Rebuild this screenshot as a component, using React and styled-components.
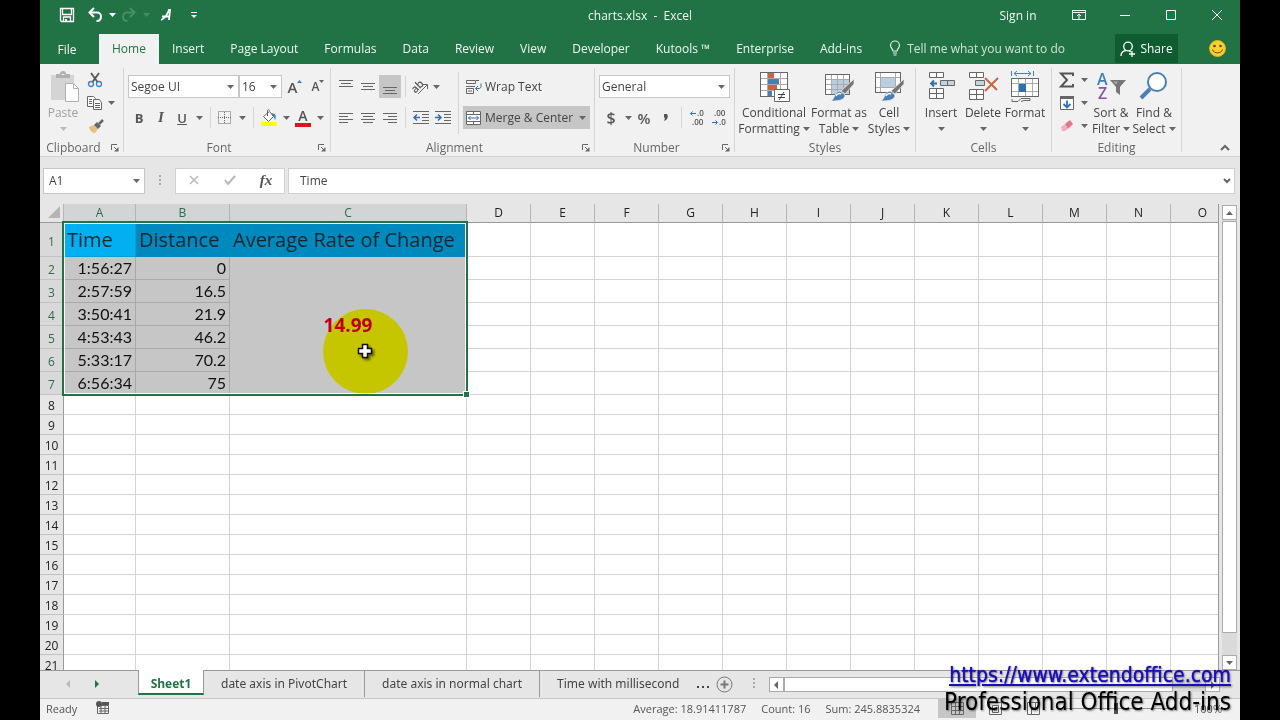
import React from "react";
import styled, { createGlobalStyle } from "styled-components";

const GlobalStyle = createGlobalStyle`
    * {
        box-sizing: border-box;
    }

    body {
        margin: 0;
        background: #000;
        font-family: "Open Sans", "Noto Sans", sans-serif;
        font-size: 12px;
        color: #444;
    }

    button, input, select {
        font: inherit;
        color: inherit;
        margin: 0;
    }

    button {
        display: flex;
        align-items: center;
        justify-content: center;
        padding: 0;
        border: 0;
        background: none;
        white-space: nowrap;
    }

    svg {
        display: block;
        flex: none;
        overflow: visible;
    }
`;

const Window = styled.div`
    position: relative;
    display: flex;
    flex-direction: column;
    height: 100vh;
    margin: 0 40px;
    background: #e6e6e6;
    overflow: hidden;
`;

/* title bar */

const TitleBar = styled.header`
    display: grid;
    grid-template-columns: 1fr auto 1fr;
    align-items: center;
    flex: none;
    height: 34px;
    padding-bottom: 4px;
    background: #217346;
    color: #f0f7f2;
`;

const QuickAccess = styled.div`
    display: flex;
    align-items: center;
    padding-left: 12px;
`;

const Title = styled.span`
    white-space: pre;
`;

const WindowControls = styled.div`
    display: flex;
    justify-content: flex-end;
`;

const PlainButton = styled.button`
    width: ${(props) => props.$w}px;
    height: ${(props) => props.$h || 23}px;
    background: ${(props) => (props.$active ? "#c6c6c6" : "none")};
    opacity: ${(props) => (props.$faded ? 0.3 : 1)};
`;

/* ribbon tabs */

const Tabs = styled.nav`
    display: flex;
    align-items: stretch;
    flex: none;
    height: 30px;
    background: #217346;
    color: #f0f7f2;
`;

const Tab = styled.button`
    padding: 0 13px 2px;
    background: ${(props) => (props.$active ? "#f1f1f1" : "none")};
    color: ${(props) => (props.$active ? "#217346" : "inherit")};
`;

const FileTab = styled(Tab)`
    width: 54px;
    margin-right: 5px;
    padding-bottom: 0;
`;

const TellMe = styled.button`
    gap: 6px;
    margin-left: 14px;
    padding-bottom: 2px;
    color: #cfe3d6;
`;

const Share = styled.button`
    gap: 4px;
    width: 63px;
    margin: 0 27px 1px auto;
    background: #0e5c2f;
    color: #fff;
`;

const Feedback = styled.button`
    width: 24px;
    margin-right: 11px;
    padding-bottom: 2px;
`;

/* ribbon */

const Ribbon = styled.section`
    display: flex;
    flex: none;
    height: 93px;
    background: #f1f1f1;
    border-bottom: 1px solid #d2d2d2;
`;

const GroupBox = styled.div`
    display: flex;
    flex-direction: column;
    flex: none;
    width: ${(props) => props.$w}px;
    margin-top: 4px;
    padding-right: 1px;
    background: linear-gradient(#d4d4d4, #d4d4d4) right top / 1px 84px no-repeat;
`;

const GroupBody = styled.div`
    display: flex;
    flex: none;
    height: 71px;
    padding: 0 ${(props) => (props.$flush ? 0 : 4)}px;
`;

const GroupFooter = styled.div`
    display: flex;
    align-items: center;
    height: 17px;
    color: #666;
`;

const GroupName = styled.span`
    flex: 1;
    text-align: center;
`;

const Rows = styled.div`
    display: flex;
    flex-direction: column;
    gap: 8px;
    padding-top: 7px;
`;

const Row = styled.div`
    display: flex;
    align-items: center;
    height: 23px;
`;

const SmallStack = styled.div`
    display: flex;
    flex-direction: column;
`;

const Divider = styled.span`
    flex: none;
    width: 1px;
    height: 21px;
    margin: 0 4px;
    background: #d4d4d4;
`;

const TallDivider = styled(Divider)`
    height: 62px;
    margin-top: 4px;
`;

const BigButton = styled.button`
    flex-direction: column;
    justify-content: flex-start;
    width: ${(props) => props.$w}px;
    padding-top: 3px;
    line-height: 16px;
    color: ${(props) => (props.$disabled ? "#a0a0a0" : "#444")};
`;

const BigIcon = styled.span`
    margin-bottom: 2px;
`;

const BigLine = styled.span`
    display: flex;
    align-items: center;
    gap: 3px;
    height: 16px;
`;

const WideButton = styled.button`
    justify-content: flex-start;
    gap: 3px;
    width: 127px;
    height: 23px;
    padding-left: 3px;
    background: ${(props) => (props.$active ? "#c6c6c6" : "none")};
`;

const ButtonText = styled.span`
    flex: 1;
    text-align: left;
`;

const WideArrow = styled.span`
    padding-right: 4px;
`;

const SelectBox = styled.label`
    position: relative;
    display: flex;
    align-items: center;
    width: ${(props) => props.$w}px;
    height: ${(props) => props.$h || 23}px;
    background: #fff;
    border: 1px solid #c6c6c6;
`;

const Select = styled.select`
    appearance: none;
    width: 100%;
    height: 100%;
    padding: 0 0 0 ${(props) => props.$pad || 2}px;
    border: 0;
    background: none;
`;

const SelectArrow = styled.span`
    position: absolute;
    right: 4px;
    pointer-events: none;
`;

const Letter = styled.span`
    font-size: ${(props) => props.$size || 13}px;
    font-weight: ${(props) => (props.$bold ? 700 : 600)};
    font-style: ${(props) => (props.$italic ? "italic" : "normal")};
    font-family: ${(props) => (props.$italic ? '"Liberation Serif", serif' : "inherit")};
    text-decoration: ${(props) => (props.$underline ? "underline" : "none")};
    color: #555;
`;

const FontColor = styled.span`
    width: 16px;
    height: 18px;
    border-bottom: 4px solid #d11a1a;
    font-size: 14px;
    font-weight: 600;
    line-height: 13px;
    text-align: center;
    color: #555;
`;

const Collapse = styled.button`
    align-self: flex-end;
    width: 20px;
    height: 17px;
    margin: 0 5px 0 auto;
`;

/* formula bar */

const FormulaBar = styled.div`
    display: flex;
    align-items: center;
    flex: none;
    height: 47px;
    padding: 0 5px 0 3px;
`;

const FormulaActions = styled.div`
    display: flex;
    justify-content: space-around;
    width: 110px;
    height: 26px;
    margin-right: 3px;
    background: #fff;
    border: 1px solid #d0d0d0;
`;

const FormulaField = styled.div`
    display: flex;
    align-items: center;
    flex: 1;
    height: 26px;
    padding-right: 3px;
    background: #fff;
    border: 1px solid #d0d0d0;
`;

const FormulaInput = styled.input`
    flex: 1;
    min-width: 0;
    padding: 0 0 0 11px;
    border: 0;
    outline: 0;
    background: none;
`;

const Grip = styled.span`
    display: flex;
    justify-content: center;
    width: ${(props) => props.$w}px;
`;

/* sheet */

const Workspace = styled.main`
    display: flex;
    flex: 1;
    min-height: 0;
`;

const Viewport = styled.div`
    position: relative;
    flex: 1;
    min-width: 0;
    overflow: hidden;
    border-right: 1px solid #999;
`;

const Sheet = styled.table`
    table-layout: fixed;
    width: 1195px;
    border-collapse: separate;
    border-spacing: 0;
    background: #fff;
`;

const Corner = styled.th`
    height: 19px;
    padding: 0 3px 2px 0;
    background: #e6e6e6;
    border-right: 1px solid #b5b5b5;
    border-bottom: 1px solid #999;

    svg {
        margin-left: auto;
    }
`;

const ColumnHead = styled.th`
    height: 19px;
    padding: 0;
    background: ${(props) => (props.$on ? "#d3d4d5" : "#e6e6e6")};
    border-right: 1px solid #b5b5b5;
    border-bottom: 1px solid #999;
    font-weight: 400;
    line-height: 16px;
    color: ${(props) => (props.$on ? "#2f6b4a" : "#222")};
`;

const RowHead = styled.th`
    height: ${(props) => props.$h}px;
    padding: ${(props) => (props.$h > 30 ? 5 : 3)}px 0 0 0;
    background: ${(props) => (props.$on ? "#d9d9d9" : "#e6e6e6")};
    border-right: 1px solid #999;
    border-bottom: 1px solid #c2c2c2;
    font-weight: 400;
    line-height: 16px;
    text-align: center;
    color: ${(props) => (props.$on ? "#2f6b4a" : "#222")};
`;

const Cell = styled.td`
    padding: 0;
    border-right: 1px solid #d4d4d4;
    border-bottom: 1px solid #d4d4d4;
`;

const TitleCell = styled(Cell)`
    padding: 0 0 0 3px;
    background: ${(props) => (props.$first ? "#00b0f0" : "#0089bc")};
    border-color: ${(props) => (props.$first ? "#00a0da" : "#0089bc")};
    font-size: 20px;
    line-height: 24px;
    white-space: nowrap;
    color: #0f2530;
`;

const NumberCell = styled(Cell)`
    padding: 0 3px 0 0;
    background: #c6c6c6;
    border-color: #a9a9a9;
    font-family: Lato, sans-serif;
    font-size: 16px;
    line-height: 20px;
    text-align: right;
    color: #111;
`;

const MergedCell = styled(Cell)`
    padding-bottom: 2px;
    background: #c6c6c6;
    font-size: 19px;
    font-weight: 700;
    text-align: center;
    color: #c00014;
`;

const Selection = styled.div`
    position: absolute;
    top: 17px;
    left: 22px;
    width: 406px;
    height: 175px;
    border: 2px solid #217346;
    box-shadow: inset 0 0 0 1px #fff;
    pointer-events: none;
`;

const FillHandle = styled.span`
    position: absolute;
    right: -3px;
    bottom: -3px;
    width: 5px;
    height: 5px;
    background: #217346;
    outline: 1px solid #fff;
`;

const Spotlight = styled.div`
    position: absolute;
    top: 105px;
    left: 283px;
    width: 85px;
    height: 85px;
    border-radius: 50%;
    background: #ffff00;
    mix-blend-mode: multiply;
    pointer-events: none;
`;

const Pointer = styled.div`
    position: absolute;
    top: 138px;
    left: 316px;
    filter: drop-shadow(2px 2px 1px rgba(0, 0, 0, 0.5));
    pointer-events: none;
`;

const VerticalScroll = styled.div`
    display: flex;
    flex-direction: column;
    flex: none;
    width: 15px;
    margin: 1px 3px 0;
    background: #dadada;
`;

const ScrollButton = styled.button`
    flex: none;
    width: 15px;
    height: 15px;
    background: #fff;
    border: 1px solid #ababab;
`;

const VerticalThumb = styled.span`
    flex: 1;
    margin: 1px 0 22px;
    background: #fff;
    border: 1px solid #ababab;
`;

/* sheet tabs */

const SheetBar = styled.div`
    display: flex;
    align-items: flex-start;
    flex: none;
    height: 28px;
    border-top: 1px solid #999;
    font-family: "Noto Sans", "Open Sans", sans-serif;
`;

const SheetNav = styled.div`
    display: flex;
    width: 98px;
    padding-left: 14px;
`;

const SheetTab = styled.button`
    height: 26px;
    padding: 0 17px 1px;
    border-right: 1px solid ${(props) => (props.$last ? "transparent" : "#999")};
`;

const ActiveSheetTab = styled.button`
    width: 66px;
    height: 25px;
    margin-top: -1px;
    background: #fff;
    border: solid #999;
    border-width: 0 1px;
    border-bottom: 2px solid #217346;
    padding-top: 3px;
    font-family: "Open Sans", sans-serif;
    font-weight: 700;
    color: #217346;
`;

const HorizontalScroll = styled.div`
    display: flex;
    flex: 1;
    margin: 6px 20px 0 0;
    background: #dadada;
`;

const HorizontalThumb = styled.span`
    flex: 1;
    margin-right: 32px;
    background: #fff;
    border: 1px solid #ababab;
`;

/* status bar */

const StatusBar = styled.footer`
    display: flex;
    align-items: center;
    flex: none;
    height: 22px;
    padding: 0 18px 3px 6px;
    background: #f1f1f1;
    border-top: 1px solid #c6c6c6;
    font-size: 11px;
    color: #555;
`;

const Recorder = styled.button`
    margin: 0 auto 0 19px;
`;

const Stats = styled.div`
    display: flex;
    gap: 15px;
    margin-right: 18px;
`;

const Zoom = styled.input`
    appearance: none;
    width: 116px;
    height: 12px;
    margin: 0 20px 0 6px;
    background: linear-gradient(#999, #999) center / 100% 1px no-repeat;

    &::-webkit-slider-thumb {
        appearance: none;
        width: 4px;
        height: 11px;
        background: #555;
    }
`;

const Promo = styled.div`
    position: absolute;
    right: 9px;
    bottom: 4px;
    display: flex;
    flex-direction: column;
    align-items: flex-end;
    font-family: "DejaVu Sans Condensed", "DejaVu Sans", sans-serif;
    font-stretch: condensed;
    font-size: 24px;
    line-height: 27px;
    white-space: nowrap;
    color: #000;
    text-shadow: 1px 1px 2px rgba(0, 0, 0, 0.5);
`;

const PromoLink = styled.a`
    font-size: 21px;
    color: #1a0dbb;
    text-shadow: 0 0 1px #1a0dbb, 1px 1px 2px rgba(0, 0, 0, 0.5);
`;

/* icons */

const Arrow = ({ color = "#666", dir = "down" }) => {
    const shapes = {
        down: "M0 1h7L3.5 5z",
        up: "M0 5h7L3.5 1z",
        left: "M5 0v8L1 4z",
        right: "M2 0v8l4-4z",
    };
    return (
        <svg width="7" height="8" viewBox={dir === "down" || dir === "up" ? "0 -1 7 8" : "0 0 7 8"}>
            <path d={shapes[dir]} fill={color} />
        </svg>
    );
};

const Icon = ({ size = 16, w, h, children }) => (
    <svg
        width={w || size}
        height={h || size}
        viewBox={`0 0 ${w || size} ${h || size}`}
        fill="none"
        stroke="#666"
    >
        {children}
    </svg>
);

const Lines = ({ y, x, widths }) => (
    <Icon w={14} h={16}>
        {widths.map((width, i) => (
            <path key={i} d={`M${x[i]} ${y + i * 3 + 0.5}h${width}`} />
        ))}
    </Icon>
);

const Dots = () => (
    <Icon w={4} h={14}>
        <path d="M2 1v2M2 5v2M2 9v2" stroke="#aaa" strokeWidth="2" />
    </Icon>
);

const SaveIcon = () => (
    <Icon>
        <path d="M1.500 1.500h13v13h-12l-1-1z" stroke="#fff" strokeWidth="1.300" />
        <path d="M3.500 2v5.500h9V2M4.500 14v-4h7v4" stroke="#fff" strokeWidth="1.300" />
        <path d="M7 12v2" stroke="#fff" strokeWidth="2" />
    </Icon>
);

const UndoIcon = () => (
    <Icon>
        <path d="M2.500 5.500H10a4 4 0 0 1 4 4c0 3-2 4.500-4.500 4.500" stroke="#fff" strokeWidth="2" />
        <path d="M7 1L2.500 5.500 7 10" stroke="#fff" strokeWidth="2" />
    </Icon>
);

const RedoIcon = () => (
    <Icon>
        <path d="M13.500 5.500H6a4 4 0 0 0-4 4c0 3 2 4.500 4.500 4.500" stroke="#9fc9b0" strokeWidth="2" />
        <path d="M9 1l4.500 4.500L9 10" stroke="#9fc9b0" strokeWidth="2" />
    </Icon>
);

const ScriptAIcon = () => (
    <Icon>
        <path d="M3 13c3-1 6-5 8-10h1l-1 10M4 9.500h8" stroke="#fff" strokeWidth="1.800" />
    </Icon>
);

const CustomizeIcon = () => (
    <Icon w={8} h={10}>
        <path d="M1 2.500h6" stroke="#fff" />
        <path d="M1 5h6L4 8z" fill="#fff" stroke="none" />
    </Icon>
);

const LauncherIcon = () => (
    <Icon w={8} h={8}>
        <path d="M.5 6V.5H6M3 3l3 3" />
        <path d="M7.500 3v4.500H3z" fill="#666" stroke="none" />
    </Icon>
);

const PasteIcon = () => (
    <Icon size={32}>
        <path d="M4 4h23v25H4z" fill="#d4d4d4" stroke="none" />
        <path d="M9 7V3h4a3 3 0 0 1 6 0h4v4z" fill="#b0b0b0" stroke="none" />
        <path d="M14.500 3.500h3" stroke="#f1f1f1" />
        <path d="M18.500 12.500h8l5 5v13h-13z" fill="#fff" stroke="#b0b0b0" />
        <path d="M26.500 12.500v5h5" stroke="#b0b0b0" />
    </Icon>
);

const CutIcon = () => (
    <Icon>
        <path d="M4 1l6.500 9M12 1L5.500 10" stroke="#555" strokeWidth="1.800" />
        <circle cx="4" cy="12" r="2.500" stroke="#3f7fbf" strokeWidth="1.300" />
        <circle cx="12" cy="12" r="2.500" stroke="#3f7fbf" strokeWidth="1.300" />
    </Icon>
);

const CopyIcon = () => (
    <Icon>
        <path d="M.5 1.500h6l2 2v8h-8z" fill="#fff" />
        <path d="M6.500 4.500h6l2 3v7h-8z" fill="#fff" />
        <path d="M2 4.500h3M2 6.500h3M2 8.500h3M8 8.500h5M8 10.500h5M8 12.500h5" />
    </Icon>
);

const PainterIcon = () => (
    <Icon>
        <path d="M1 9l5-2 4 4-3 4c-2 0-5-2-6-6z" fill="#e8bf7c" stroke="none" />
        <path d="M6 7l3-3 4 4-3 3z" fill="#666" stroke="none" />
        <path d="M11 6l4-4" stroke="#666" strokeWidth="2.500" />
    </Icon>
);

const GrowIcon = ({ shrink }) => (
    <Icon w={5} h={16}>
        <path
            d={shrink ? "M0 1h5L2.500 4z" : "M0 4h5L2.500 1z"}
            fill={shrink ? "#666" : "#3f7fbf"}
            stroke="none"
        />
    </Icon>
);

const BordersIcon = () => (
    <Icon>
        <path
            d="M1.500 1.500h12v12h-12zM7.500 2v12M1 7.500h13"
            stroke="#666"
            strokeDasharray="1 1"
        />
    </Icon>
);

const FillIcon = () => (
    <Icon w={18} h={18}>
        <path d="M3.500 7.500l6-5 4 5-5 5z" fill="#fff" stroke="#666" />
        <path d="M7.500 7V1.500c0-1 2-1 2 0" stroke="#666" />
        <path d="M11 4l4 1c1 2 1 4 0 6-1-3-2-4-4-7z" fill="#3f7fbf" stroke="none" />
        <path d="M1 13h16v4H1z" fill="#ffff00" stroke="none" />
    </Icon>
);

const OrientIcon = () => (
    <Icon>
        <text
            x="0"
            y="11"
            fontSize="11"
            fontWeight="600"
            fill="#555"
            stroke="none"
            transform="rotate(-45 6 9)"
        >
            ab
        </text>
        <path d="M6 15L15 6M11 5.500H15.500V10" />
    </Icon>
);

const IndentIcon = ({ out }) => (
    <Icon>
        <path d="M0 1.500h16M9 4.500h7M9 7.500h7M9 10.500h7M0 13.500h16" />
        {out ? (
            <path d="M7 7.500H1M4 4.500l-3 3 3 3" stroke="#2f6fb3" strokeWidth="1.500" />
        ) : (
            <path d="M0 7.500h6M3 4.500l3 3-3 3" stroke="#2f6fb3" strokeWidth="1.500" />
        )}
    </Icon>
);

const WrapIcon = () => (
    <Icon>
        <path d="M.5 1.500h9v3h-9zM.5 9.500h7v5h-7zM2 12h4" />
        <path d="M0 7.500h9M10 1.500h3" />
        <path d="M15 4.500v3c0 1-1 2-2 2h-3M12 7l-2.500 2.500L12 12" stroke="#2f6fb3" />
    </Icon>
);

const MergeIcon = () => (
    <Icon>
        <path d="M.5 1.500h14v13H.5zM.5 4.500h14M.5 11.500h14M7.500 1.500v3M7.500 11.500v3" fill="#fff" />
        <path d="M2.500 8h10M4.500 6l-2 2 2 2M10.500 6l2 2-2 2" stroke="#2f6fb3" />
    </Icon>
);

const DecimalIcon = ({ less }) => (
    <Icon>
        <g fontSize="8" fontWeight="600" fill="#555" stroke="none">
            <text x={less ? 3 : 8} y="6">{less ? ".00" : ".0"}</text>
            <text x={less ? 8 : 3} y="15">{less ? ".0" : ".00"}</text>
        </g>
        {less ? (
            <path d="M1 12.500h5M4.500 10.500l2 2-2 2" stroke="#2f6fb3" />
        ) : (
            <path d="M2 3.500h5M3.500 1.500l-2 2 2 2" stroke="#2f6fb3" />
        )}
    </Icon>
);

const ConditionalIcon = () => (
    <Icon size={32}>
        <path d="M2.500 1.500h27v24h-27z" fill="#fff" />
        <path d="M10 2h6v6h-6zM10 14h9v6h-9z" fill="#c8644a" stroke="none" />
        <path d="M10 8h11v6H10zM10 20h4v6h-4z" fill="#4a7fb5" stroke="none" />
        <path d="M2.500 7.500h27M2.500 13.500h27M2.500 19.500h27M9.500 1.500v24M22.500 1.500v24" stroke="#aaa" />
        <path d="M2.500 1.500h27v24h-27z" />
        <path d="M16.500 18.500h15v12h-15z" fill="#fff" />
        <path d="M20 23.500h7M20 26.500h7M26 21l-5 8" stroke="#444" />
    </Icon>
);

const Brush = () => (
    <>
        <path d="M31 8v5l-9 10-4-3z" fill="#777" stroke="#f1f1f1" strokeWidth=".7" />
        <path d="M17 20l5 4c0 5-6 6-14 6 4-2 3-9 9-10z" fill="#4a7fb5" stroke="#f1f1f1" strokeWidth=".7" />
        <path d="M13 25c1-2 3-3 5-2" stroke="#fff" strokeWidth="1.500" />
    </>
);

const TableIcon = () => (
    <Icon size={32}>
        <path d="M2.500 3.500h24v20h-24z" fill="#fff" />
        <path d="M9 9h17v14H9z" fill="#b9cfe0" stroke="none" />
        <path d="M2.500 8.500h24M2.500 13.500h24M2.500 18.500h24M8.500 3.500v20M14.500 3.500v20M20.500 3.500v20" stroke="#aaa" />
        <path d="M2.500 3.500h24v20h-24z" />
        <Brush />
    </Icon>
);

const CellStyleIcon = () => (
    <Icon size={32}>
        <path d="M2.500 1.500h25v20h-25z" fill="#fff" />
        <path d="M2.500 6.500h25M2.500 16.500h25M7.500 1.500v20M22.500 1.500v20" stroke="#aaa" />
        <path d="M8 7h14v9H8z" fill="#b9cfe0" stroke="none" />
        <path d="M2.500 1.500h25v20h-25z" />
        <Brush />
    </Icon>
);

const InsertIcon = () => (
    <Icon size={32}>
        <path d="M4.500 1.500h14v5h-14zM11.500 1.500v5M4.500 17.500h14v10h-14zM11.500 17.500v10M4.500 22.500h14" fill="#fff" />
        <path d="M15.500 9.500h14v5h-14zM22.500 9.500v5" fill="#c5d3dc" />
        <path d="M12 12.500H6M9 9.500l-3 3 3 3" stroke="#2f6fb3" strokeWidth="1.800" />
    </Icon>
);

const DeleteIcon = () => (
    <Icon size={32}>
        <path d="M2.500 1.500h14v5h-14zM9.500 1.500v5M2.500 18.500h14v10h-14zM9.500 18.500v10M2.500 23.500h14" fill="#fff" />
        <path d="M8.500 9.500h9v5h-9z" fill="#c5d3dc" />
        <path d="M18 7l12 12M31 7L18 20" stroke="#d3623f" strokeWidth="2" />
    </Icon>
);

const FormatIcon = () => (
    <Icon size={32}>
        <path d="M2.500 0v5M24.500 0v5M5 2.500h17M8 0L5 2.500 8 5M19 0l3 2.500L19 5" stroke="#4a7fb5" />
        <path d="M2.500 7.500h27v18h-27z" fill="#fff" />
        <path d="M2.500 12.500h27M2.500 20.500h27M9.500 7.500v18M16.500 7.500v18M23.500 7.500v18" stroke="#aaa" />
        <path d="M2.500 7.500h27v18h-27z" />
        <path d="M10 13h7v8h-7z" fill="#2f6fb3" stroke="none" />
        <path d="M3 28v2.500h6l3-3h9v2h-6l-3 1" />
    </Icon>
);

const SumIcon = () => (
    <Icon>
        <path d="M14 4V1.500H2L8 8l-6 6.500h12V12" stroke="#555" strokeWidth="2" />
    </Icon>
);

const FillDownIcon = () => (
    <Icon>
        <path d="M1.500 1.500h13v13h-13z" fill="#fff" />
        <path d="M1 1h14v3H1z" fill="#666" stroke="none" />
        <path d="M8 5.500v7M4.500 9L8 12.500 11.500 9" stroke="#2f6fb3" strokeWidth="1.800" />
    </Icon>
);

const EraserIcon = () => (
    <Icon>
        <path d="M6 6l5-4 3 4-5 5z" fill="#e5738b" stroke="none" />
        <path d="M6 6l3 5-3 2H3L2 9z" fill="#eeb0bd" stroke="none" />
    </Icon>
);

const SortIcon = () => (
    <Icon size={32}>
        <g fontSize="16" fontWeight="600" stroke="none">
            <text x="2" y="14" fill="#3f7fbf">A</text>
            <text x="3" y="28" fill="#8a57a8">Z</text>
        </g>
        <path d="M15 9h16l-6 7v8l-4-3v-5z" fill="#777" stroke="none" />
        <path d="M18 10.500h5l-2 3z" fill="#aaa" stroke="none" />
    </Icon>
);

const FindIcon = () => (
    <Icon size={32}>
        <circle cx="19" cy="11" r="9" fill="#fff" stroke="#4a7fb5" strokeWidth="2" />
        <path d="M12 18L3 27" stroke="#4a7fb5" strokeWidth="4" />
    </Icon>
);

const BulbIcon = () => (
    <Icon w={12} h={16}>
        <path d="M4 11c0-2-2.500-3-2.500-5.500a4.500 4.500 0 0 1 9 0C10.500 8 8 9 8 11zM4 13h4M4.500 15h3" stroke="#e3f0e8" strokeWidth="1.200" />
    </Icon>
);

const PersonIcon = () => (
    <Icon>
        <circle cx="8" cy="5.500" r="4.300" stroke="#fff" strokeWidth="1.300" />
        <path d="M1 15c0-3 2-5 5-5.500M9 10l2 1M12 10v6M9 13h6" stroke="#fff" strokeWidth="1.300" />
    </Icon>
);

const SmileIcon = () => (
    <Icon w={17} h={17}>
        <circle cx="8.500" cy="8.500" r="8" fill="#fbd02d" stroke="#e8ac1b" />
        <circle cx="5.500" cy="6" r="1.300" fill="#5d4510" stroke="none" />
        <circle cx="11.500" cy="6" r="1.300" fill="#5d4510" stroke="none" />
        <path d="M3.500 9.500c1 4.500 9 4.500 10 0" stroke="#5d4510" />
    </Icon>
);

/* pieces */

const Group = ({ name, w, launcher, flush, children }) => (
    <GroupBox $w={w}>
        <GroupBody $flush={flush}>{children}</GroupBody>
        <GroupFooter>
            <GroupName>{name}</GroupName>
            {launcher && (
                <PlainButton $w={16} $h={16} aria-label={`${name} settings`}>
                    <LauncherIcon />
                </PlainButton>
            )}
        </GroupFooter>
    </GroupBox>
);

const Tool = ({ label, w = 22, h, active, children }) => (
    <PlainButton $w={w} $h={h} $active={active} aria-label={label}>
        {children}
    </PlainButton>
);

const Big = ({ w, icon, first, second, disabled }) => (
    <BigButton $w={w} $disabled={disabled}>
        <BigIcon>{icon}</BigIcon>
        <BigLine>{first}</BigLine>
        <BigLine>
            {second}
            <Arrow color={disabled ? "#bbb" : "#666"} />
        </BigLine>
    </BigButton>
);

const Dropdown = ({ label, value, w, h, pad }) => (
    <SelectBox $w={w} $h={h}>
        <Select $pad={pad} aria-label={label} defaultValue={value}>
            <option>{value}</option>
        </Select>
        <SelectArrow>
            <Arrow />
        </SelectArrow>
    </SelectBox>
);

const tabs = [
    "Home",
    "Insert",
    "Page Layout",
    "Formulas",
    "Data",
    "Review",
    "View",
    "Developer",
    "Kutools ™",
    "Enterprise",
    "Add-ins",
];

const columns = "ABCDEFGHIJKLMNO".split("");
const columnWidths = { A: 72, B: 94, C: 237 };

const data = [
    ["1:56:27", "0"],
    ["2:57:59", "16.5"],
    ["3:50:41", "21.9"],
    ["4:53:43", "46.2"],
    ["5:33:17", "70.2"],
    ["6:56:34", "75"],
];

const emptyRows = Array.from({ length: 14 }, (_, i) => i + 8);

const blanks = (from) => columns.slice(from).map((column) => <Cell key={column} />);

const Grid = () => (
    <Viewport>
        <Sheet>
            <colgroup>
                <col width="24" />
                {columns.map((column) => (
                    <col key={column} width={columnWidths[column] || 64} />
                ))}
            </colgroup>
            <thead>
                <tr>
                    <Corner>
                        <Icon w={12} h={12}>
                            <path d="M12 0v12H0z" fill="#b5b5b5" stroke="none" />
                        </Icon>
                    </Corner>
                    {columns.map((column, i) => (
                        <ColumnHead key={column} $on={i < 3}>
                            {column}
                        </ColumnHead>
                    ))}
                </tr>
            </thead>
            <tbody>
                <tr>
                    <RowHead $h={34} $on>1</RowHead>
                    <TitleCell $first>Time</TitleCell>
                    <TitleCell>Distance</TitleCell>
                    <TitleCell>Average Rate of Change</TitleCell>
                    {blanks(3)}
                </tr>
                {data.map(([time, distance], i) => (
                    <tr key={time}>
                        <RowHead $h={23} $on>{i + 2}</RowHead>
                        <NumberCell>{time}</NumberCell>
                        <NumberCell>{distance}</NumberCell>
                        {i === 0 && <MergedCell rowSpan={6}>14.99</MergedCell>}
                        {blanks(3)}
                    </tr>
                ))}
                {emptyRows.map((row) => (
                    <tr key={row}>
                        <RowHead $h={20}>{row}</RowHead>
                        {blanks(0)}
                    </tr>
                ))}
            </tbody>
        </Sheet>
        <Selection>
            <FillHandle />
        </Selection>
        <Spotlight />
        <Pointer>
            <Icon w={18} h={18}>
                <path
                    d="M6.500 2.500h5v4h4v5h-4v4h-5v-4h-4v-5h4z"
                    fill="#fff"
                    stroke="#111"
                    strokeWidth="1.500"
                />
            </Icon>
        </Pointer>
    </Viewport>
);

const App = () => (
    <Window>
        <GlobalStyle />
        <TitleBar>
            <QuickAccess>
                <Tool label="Save" w={30}><SaveIcon /></Tool>
                <Tool label="Undo" w={26}><UndoIcon /></Tool>
                <Tool label="Undo list" w={8}><Arrow color="#fff" /></Tool>
                <PlainButton $w={26} $faded aria-label="Redo"><RedoIcon /></PlainButton>
                <PlainButton $w={8} $faded aria-label="Redo list"><Arrow color="#9fc9b0" /></PlainButton>
                <Tool label="Font style" w={32}><ScriptAIcon /></Tool>
                <Tool label="Customize toolbar" w={24}><CustomizeIcon /></Tool>
            </QuickAccess>
            <Title>charts.xlsx  -  Excel</Title>
            <WindowControls>
                <PlainButton $w={76}>Sign in</PlainButton>
                <Tool label="Ribbon display" w={46}>
                    <Icon w={14} h={12}>
                        <path d="M.5 1.500h13v9H.5zM.5 3.500h13M7 10V5M5 7l2-2 2 2" stroke="#fff" />
                    </Icon>
                </Tool>
                <Tool label="Minimize" w={46}>
                    <Icon w={10} h={10}><path d="M0 5.500h10" stroke="#fff" /></Icon>
                </Tool>
                <Tool label="Maximize" w={46}>
                    <Icon w={10} h={10}><path d="M.5.500h9v9h-9z" stroke="#fff" /></Icon>
                </Tool>
                <Tool label="Close" w={46}>
                    <Icon w={10} h={10}><path d="M0 0l10 10M10 0L0 10" stroke="#fff" /></Icon>
                </Tool>
            </WindowControls>
        </TitleBar>
        <Tabs>
            <FileTab>File</FileTab>
            {tabs.map((tab) => (
                <Tab key={tab} $active={tab === "Home"}>{tab}</Tab>
            ))}
            <TellMe>
                <BulbIcon />
                Tell me what you want to do
            </TellMe>
            <Share>
                <PersonIcon />
                Share
            </Share>
            <Feedback aria-label="Feedback"><SmileIcon /></Feedback>
        </Tabs>
        <Ribbon>
            <Group name="Clipboard" w={84} launcher flush>
                <Big w={46} icon={<PasteIcon />} first="Paste" disabled />
                <SmallStack>
                    <Tool label="Cut" w={18}><CutIcon /></Tool>
                    <Row>
                        <Tool label="Copy" w={18}><CopyIcon /></Tool>
                        <Tool label="Copy options" w={15}><Arrow /></Tool>
                    </Row>
                    <Tool label="Format painter" w={20}><PainterIcon /></Tool>
                </SmallStack>
            </Group>
            <Group name="Font" w={207} launcher>
                <Rows>
                    <Row>
                        <Dropdown label="Font" value="Segoe UI" w={111} />
                        <Dropdown label="Font size" value="16" w={43} />
                        <Tool label="Increase font size" w={26}>
                            <Letter $size={15}>A</Letter>
                            <GrowIcon />
                        </Tool>
                        <Tool label="Decrease font size" w={20}>
                            <Letter $size={12}>A</Letter>
                            <GrowIcon shrink />
                        </Tool>
                    </Row>
                    <Row>
                        <Tool label="Bold"><Letter $bold>B</Letter></Tool>
                        <Tool label="Italic"><Letter $italic $size={15}>I</Letter></Tool>
                        <Tool label="Underline" w={20}><Letter $underline>U</Letter></Tool>
                        <Tool label="Underline options" w={14}><Arrow /></Tool>
                        <Divider />
                        <Tool label="Borders" w={20}><BordersIcon /></Tool>
                        <Tool label="Border options" w={14}><Arrow /></Tool>
                        <Divider />
                        <Tool label="Fill color"><FillIcon /></Tool>
                        <Tool label="Fill options" w={12}><Arrow /></Tool>
                        <Tool label="Font color"><FontColor>A</FontColor></Tool>
                        <Tool label="Font color options" w={12}><Arrow /></Tool>
                    </Row>
                </Rows>
            </Group>
            <Group name="Alignment" w={264} launcher>
                <Rows>
                    <Row>
                        <Tool label="Top align"><Lines y={1} x={[0, 2, 0]} widths={[14, 10, 14]} /></Tool>
                        <Tool label="Middle align"><Lines y={4} x={[0, 2, 0]} widths={[14, 10, 14]} /></Tool>
                        <Tool label="Bottom align" active><Lines y={8} x={[0, 2, 0]} widths={[14, 10, 14]} /></Tool>
                        <Divider />
                        <Tool label="Orientation" w={20}><OrientIcon /></Tool>
                        <Tool label="Orientation options" w={12}><Arrow /></Tool>
                    </Row>
                    <Row>
                        <Tool label="Align left"><Lines y={3} x={[0, 0, 0, 0]} widths={[14, 9, 14, 9]} /></Tool>
                        <Tool label="Center"><Lines y={3} x={[0, 2, 0, 2]} widths={[14, 10, 14, 10]} /></Tool>
                        <Tool label="Align right"><Lines y={3} x={[0, 5, 0, 5]} widths={[14, 9, 14, 9]} /></Tool>
                        <Divider />
                        <Tool label="Decrease indent"><IndentIcon out /></Tool>
                        <Tool label="Increase indent"><IndentIcon /></Tool>
                    </Row>
                </Rows>
                <TallDivider />
                <Rows>
                    <WideButton>
                        <WrapIcon />
                        <ButtonText>Wrap Text</ButtonText>
                    </WideButton>
                    <WideButton $active>
                        <MergeIcon />
                        <ButtonText>Merge &amp; Center</ButtonText>
                        <WideArrow><Arrow /></WideArrow>
                    </WideButton>
                </Rows>
            </Group>
            <Group name="Number" w={140} launcher>
                <Rows>
                    <Row>
                        <Dropdown label="Number format" value="General" w={131} />
                    </Row>
                    <Row>
                        <Tool label="Accounting format" w={24}><Letter $size={16}>$</Letter></Tool>
                        <Tool label="Accounting options" w={10}><Arrow /></Tool>
                        <Tool label="Percent"><Letter $size={15}>%</Letter></Tool>
                        <Tool label="Comma style">
                            <Icon w={6} h={10}>
                                <path d="M1 1h3c2 3 0 6-3 7 1-2 1-3 0-4z" fill="#555" stroke="none" />
                            </Icon>
                        </Tool>
                        <Divider />
                        <Tool label="Increase decimal"><DecimalIcon /></Tool>
                        <Tool label="Decrease decimal"><DecimalIcon less /></Tool>
                    </Row>
                </Rows>
            </Group>
            <Group name="Styles" w={181}>
                <Big w={70} icon={<ConditionalIcon />} first="Conditional" second="Formatting" />
                <Big w={60} icon={<TableIcon />} first="Format as" second="Table" />
                <Big w={40} icon={<CellStyleIcon />} first="Cell" second="Styles" />
            </Group>
            <Group name="Cells" w={136}>
                <Big w={42} icon={<InsertIcon />} first="Insert" />
                <Big w={42} icon={<DeleteIcon />} first="Delete" />
                <Big w={42} icon={<FormatIcon />} first="Format" />
            </Group>
            <Group name="Editing" w={130}>
                <SmallStack>
                    <Row>
                        <Tool label="AutoSum"><SumIcon /></Tool>
                        <Tool label="AutoSum options" w={12}><Arrow /></Tool>
                    </Row>
                    <Row>
                        <Tool label="Fill"><FillDownIcon /></Tool>
                        <Tool label="Fill options" w={12}><Arrow /></Tool>
                    </Row>
                    <Row>
                        <Tool label="Clear"><EraserIcon /></Tool>
                        <Tool label="Clear options" w={12}><Arrow /></Tool>
                    </Row>
                </SmallStack>
                <Big w={42} icon={<SortIcon />} first="Sort &amp;" second="Filter" />
                <Big w={44} icon={<FindIcon />} first="Find &amp;" second="Select" />
            </Group>
            <Collapse aria-label="Collapse ribbon">
                <Icon w={10} h={8}><path d="M1 6l4-4 4 4" strokeWidth="2" /></Icon>
            </Collapse>
        </Ribbon>
        <FormulaBar>
            <Dropdown label="Name box" value="A1" w={102} h={26} pad={5} />
            <Grip $w={30}><Dots /></Grip>
            <FormulaActions>
                <Tool label="Cancel" w={30}>
                    <Icon w={10} h={10}><path d="M1 1l8 8M9 1L1 9" stroke="#b8b8b8" strokeWidth="1.500" /></Icon>
                </Tool>
                <Tool label="Enter" w={30}>
                    <Icon w={12} h={10}><path d="M1 5l3 4 7-8" stroke="#b8b8b8" strokeWidth="2" /></Icon>
                </Tool>
                <Tool label="Insert function" w={30}><Letter $italic $size={15}>fx</Letter></Tool>
            </FormulaActions>
            <FormulaField>
                <FormulaInput aria-label="Formula" defaultValue="Time" />
                <Icon w={8} h={6}><path d="M1 1l3 3 3-3" strokeWidth="2" /></Icon>
            </FormulaField>
        </FormulaBar>
        <Workspace>
            <Grid />
            <VerticalScroll>
                <ScrollButton aria-label="Scroll up"><Arrow dir="up" /></ScrollButton>
                <VerticalThumb />
                <ScrollButton aria-label="Scroll down"><Arrow /></ScrollButton>
            </VerticalScroll>
        </Workspace>
        <SheetBar>
            <SheetNav>
                <Tool label="Previous sheets" w={28} h={26}><Arrow dir="left" color="#bbb" /></Tool>
                <Tool label="Next sheets" w={28} h={26}><Arrow dir="right" color="#217346" /></Tool>
            </SheetNav>
            <ActiveSheetTab>Sheet1</ActiveSheetTab>
            <SheetTab>date axis in PivotChart</SheetTab>
            <SheetTab>date axis in normal chart</SheetTab>
            <SheetTab $last>Time with millisecond</SheetTab>
            <Tool label="More sheets" w={12} h={26}>
                <Icon w={12} h={14}>
                    <path d="M0 10h2M5 10h2M10 10h2" strokeWidth="2" stroke="#444" />
                </Icon>
            </Tool>
            <Tool label="New sheet" w={30} h={26}>
                <Icon w={17} h={17}>
                    <circle cx="8.500" cy="8.500" r="7.500" stroke="#777" />
                    <path d="M4.500 8.500h8M8.500 4.500v8" strokeWidth="2" stroke="#777" />
                </Icon>
            </Tool>
            <Tool label="Resize tabs" w={30} h={26}><Dots /></Tool>
            <HorizontalScroll>
                <ScrollButton aria-label="Scroll left"><Arrow dir="left" /></ScrollButton>
                <HorizontalThumb />
                <ScrollButton aria-label="Scroll right"><Arrow dir="right" /></ScrollButton>
            </HorizontalScroll>
        </SheetBar>
        <StatusBar>
            Ready
            <Recorder aria-label="Record macro">
                <Icon w={14} h={14}>
                    <path d="M1.500 4.500h11v8h-11zM3 7.500h9M3 10h9M5 5v8M9 5v8" />
                    <path d="M6 1h7v3H6z" fill="#555" stroke="none" />
                    <circle cx="3" cy="3" r="3" fill="#555" stroke="none" />
                </Icon>
            </Recorder>
            <Stats>
                <span>Average: 18.91411787</span>
                <span>Count: 16</span>
                <span>Sum: 245.8835324</span>
            </Stats>
            <Tool label="Normal view" w={38} h={20} active>
                <Icon w={13} h={13}><path d="M.5.500h12v12H.5zM.5 4.500h12M.5 8.500h12M4.500.500v12M8.500.500v12" /></Icon>
            </Tool>
            <Tool label="Page layout view" w={38} h={20}>
                <Icon w={13} h={13}><path d="M.5.500h12v12H.5zM3.500 3.500h6v7h-6zM5 6h3M5 8h3" /></Icon>
            </Tool>
            <Tool label="Page break view" w={38} h={20}>
                <Icon w={13} h={13}><path d="M.5.500h12v12H.5zM4.500 12V6h4V0" /></Icon>
            </Tool>
            <Zoom type="range" aria-label="Zoom" min="0" max="200" defaultValue="100" />
            100%
        </StatusBar>
        <Promo>
            <PromoLink href="https://www.extendoffice.com">https://www.extendoffice.com</PromoLink>
            <span>Professional Office Add-ins</span>
        </Promo>
    </Window>
);

export default App;
